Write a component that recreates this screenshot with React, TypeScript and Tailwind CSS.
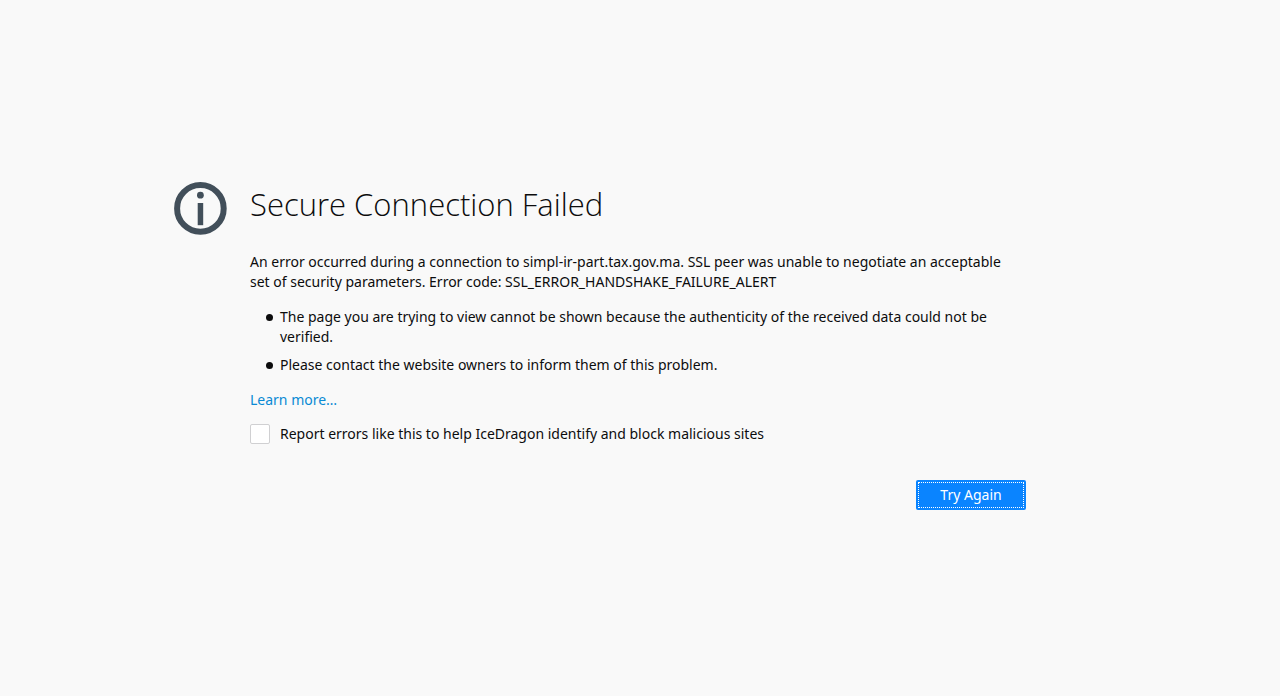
type InfoIconProps = {
  className?: string;
};

function InfoIcon({ className }: InfoIconProps) {
  return (
    <svg viewBox="0 0 54 54" className={className} aria-hidden="true">
      <circle
        cx="26.4"
        cy="26.4"
        r="23.3"
        fill="none"
        stroke="#424f5a"
        strokeWidth="6"
      />
      <circle cx="26.4" cy="13.2" r="3.4" fill="#424f5a" />
      <rect x="23.7" y="21" width="5.5" height="22.2" fill="#424f5a" />
    </svg>
  );
}

const reasons = [
  "The page you are trying to view cannot be shown because the authenticity of the received data could not be verified.",
  "Please contact the website owners to inform them of this problem.",
];

export default function App() {
  return (
    <div className="flex min-h-screen items-center justify-center bg-[#f9f9f9] pr-20 pb-1 font-['Noto_Sans',sans-serif] text-sm leading-5 text-[#0c0c0d]">
      <main className="flex w-full max-w-[852px] items-start gap-[22px]">
        <InfoIcon className="size-[54px] shrink-0" />
        <div className="min-w-0 flex-1">
          <h1 className="font-['Open_Sans',sans-serif] text-[31px] leading-[44px] font-light">
            Secure Connection Failed
          </h1>

          <p className="mt-[26px] pr-4">
            An error occurred during a connection to simpl-ir-part.tax.gov.ma.
            SSL peer was unable to negotiate an acceptable set of security
            parameters. Error code: SSL_ERROR_HANDSHAKE_FAILURE_ALERT
          </p>

          <ul className="mt-[15px] space-y-2 pr-4">
            {reasons.map((reason) => (
              <li key={reason} className="flex">
                <span className="flex h-5 w-[30px] shrink-0 items-center pl-4">
                  <span className="size-[7px] rounded-full bg-[#0c0c0d]" />
                </span>
                <span>{reason}</span>
              </li>
            ))}
          </ul>

          <p className="mt-[15px]">
            <a href="#learn-more" className="text-[#0a8ad4]">
              Learn more…
            </a>
          </p>

          <div className="mt-[14px] flex items-center gap-[10px]">
            <input
              id="report-errors"
              type="checkbox"
              className="size-5 appearance-none rounded-xs border border-[#d0d0d2] bg-white checked:bg-[#0a84ff]"
            />
            <label htmlFor="report-errors">
              Report errors like this to help IceDragon identify and block
              malicious sites
            </label>
          </div>

          <div className="mt-9 flex justify-end">
            <button
              type="button"
              className="h-[30px] w-[110px] rounded-xs bg-[#0a84ff] p-0.5 text-white"
            >
              <span className="flex h-full items-center justify-center border border-dotted border-white">
                Try Again
              </span>
            </button>
          </div>
        </div>
      </main>
    </div>
  );
}
